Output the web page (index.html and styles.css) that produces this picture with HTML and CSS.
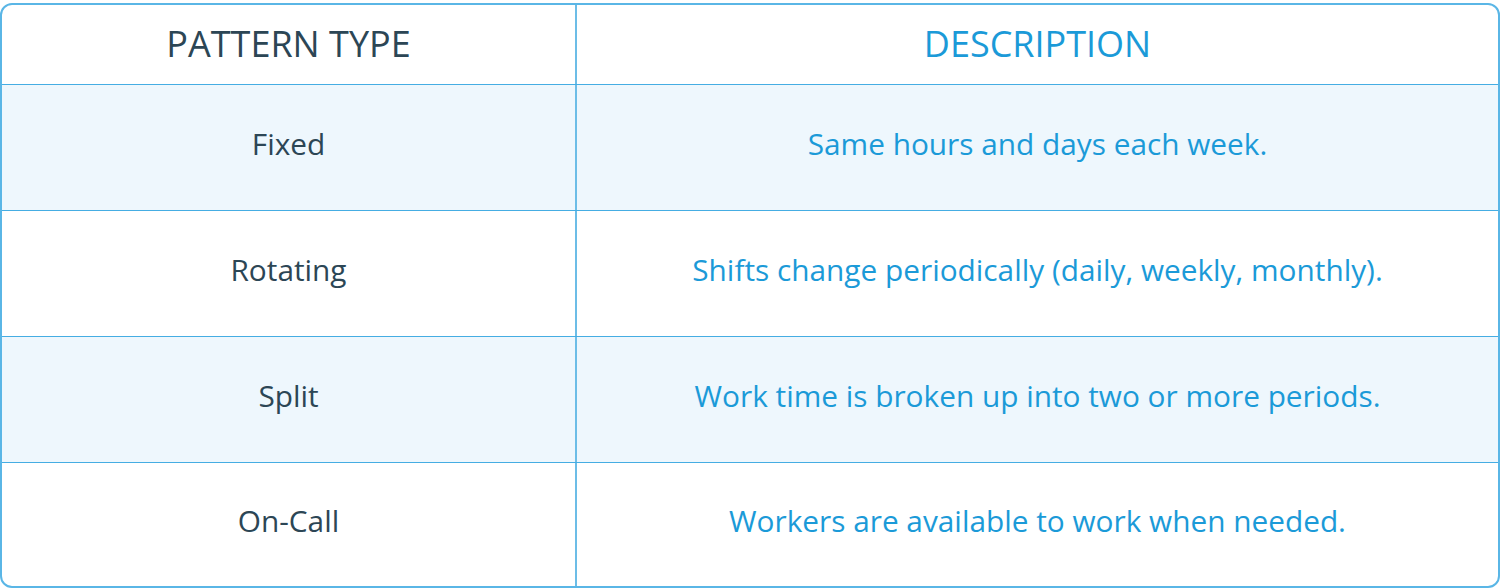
FILE: index.html
```html
<!DOCTYPE html>
<html>
<head>
<meta charset="utf-8">
<link rel="stylesheet" href="styles.css">
</head>
<body>
<div class="table">
  <div class="row head">
    <div class="cell type">PATTERN TYPE</div>
    <div class="cell desc">DESCRIPTION</div>
  </div>
  <div class="row alt">
    <div class="cell type">Fixed</div>
    <div class="cell desc">Same hours and days each week.</div>
  </div>
  <div class="row">
    <div class="cell type">Rotating</div>
    <div class="cell desc">Shifts change periodically (daily, weekly, monthly).</div>
  </div>
  <div class="row alt">
    <div class="cell type">Split</div>
    <div class="cell desc">Work time is broken up into two or more periods.</div>
  </div>
  <div class="row last">
    <div class="cell type">On-Call</div>
    <div class="cell desc">Workers are available to work when needed.</div>
  </div>
</div>
</body>
</html>
```
FILE: styles.css
```css
html, body {
  margin: 0;
  padding: 0;
  background: #ffffff;
}
body {
  padding-top: 3px;
  font-family: "Open Sans", "Noto Sans", sans-serif;
}
.table {
  box-sizing: border-box;
  width: 1500px;
  height: 585px;
  border: 2px solid #5ab6e6;
  border-radius: 12px;
  overflow: hidden;
  display: grid;
  grid-template-rows: 80px 126px 126px 126px 1fr;
}
.row {
  display: grid;
  grid-template-columns: 575px 1fr;
  border-bottom: 1px solid #45ade3;
}
.row.last {
  border-bottom: none;
}
.row.alt {
  background: #eef7fd;
}
.cell {
  display: flex;
  align-items: center;
  justify-content: center;
  font-size: 29.8px;
  padding-bottom: 8px;
}
.cell.type {
  color: #2c4655;
  border-right: 2px solid #6cbde7;
}
.cell.desc {
  color: #1b9ad8;
}
.head .cell {
  font-size: 36px;
  padding-bottom: 2px;
}
```
